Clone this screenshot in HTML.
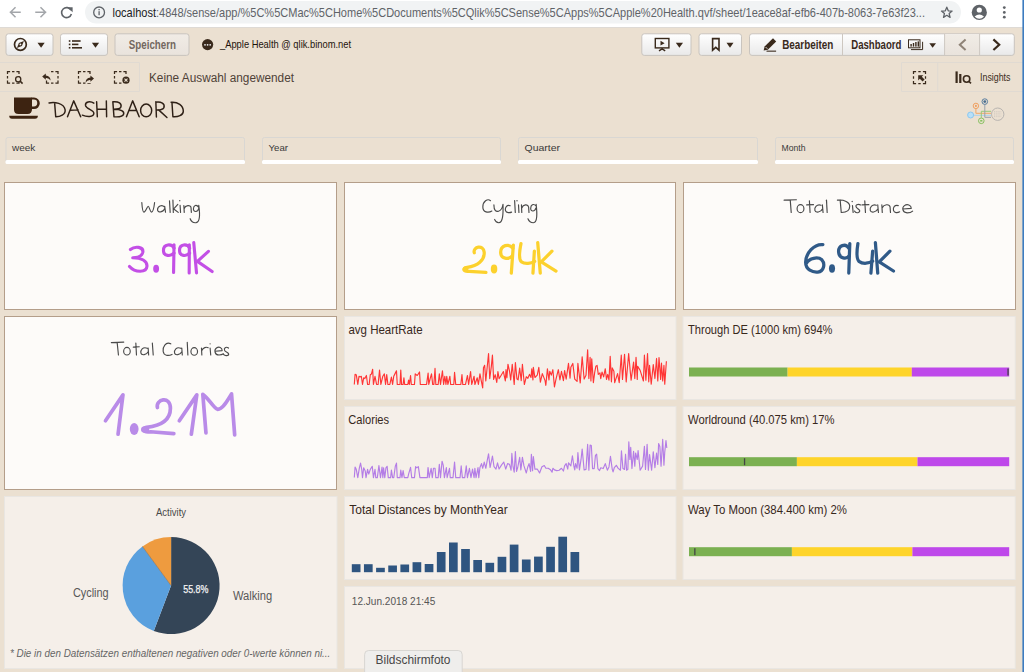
<!DOCTYPE html>
<html><head><meta charset="utf-8"><style>html,body{margin:0;padding:0;width:1024px;height:672px;overflow:hidden;background:#ebe0d1}svg{display:block;font-family:"Liberation Sans",sans-serif}</style></head>
<body><svg width="1024" height="672" viewBox="0 0 1024 672">
<rect x="0" y="0" width="1024" height="672" fill="#ebe0d1"/>
<rect x="0" y="0" width="1024" height="27" fill="#ffffff"/><rect x="0" y="27" width="1024" height="1" fill="#dedad5"/>
<rect x="85" y="1" width="876" height="22.5" rx="11.25" fill="#f1f3f4"/>
<g stroke="#a3a6aa" stroke-width="1.5" fill="none" stroke-linecap="square"><path d="M10.5 12.3H20M15 7.8L10.5 12.3L15 16.8"/><path d="M36 12.3H45.5M41 7.8L45.5 12.3L41 16.8"/></g>
<g stroke="#5f6368" stroke-width="1.6" fill="none"><path d="M71 10.2A5 5 0 1 0 71.4 14"/></g><path d="M67.5 7.3H72.6V12.3Z" fill="#5f6368"/>
<circle cx="99.1" cy="12.4" r="5.4" stroke="#5f6368" stroke-width="1.3" fill="none"/><rect x="98.45" y="11.2" width="1.3" height="4" fill="#5f6368"/><rect x="98.45" y="9" width="1.3" height="1.3" fill="#5f6368"/>
<text x="112.5" y="16.8" font-size="13" fill="#5f6368" font-weight="normal" font-style="normal" textLength="812.5" lengthAdjust="spacingAndGlyphs"><tspan fill="#202124">localhost</tspan>:4848/sense/app/%5C%5CMac%5CHome%5CDocuments%5CQlik%5CSense%5CApps%5CApple%20Health.qvf/sheet/1eace8af-efb6-407b-8063-7e63f23...</text>
<polygon points="946.80,7.20 948.27,10.78 952.13,11.07 949.18,13.57 950.09,17.33 946.80,15.30 943.51,17.33 944.42,13.57 941.47,11.07 945.33,10.78" fill="none" stroke="#5f6368" stroke-width="1.3" stroke-linejoin="round"/>
<circle cx="979.3" cy="12.4" r="7.6" fill="#5f6368"/><circle cx="979.3" cy="10" r="2.6" fill="#fff"/><path d="M974.6 16.6Q979.3 12.6 984 16.6Q981.8 18.8 979.3 18.8Q976.8 18.8 974.6 16.6Z" fill="#fff"/>
<g fill="#5f6368"><circle cx="1004.3" cy="7.6" r="1.4"/><circle cx="1004.3" cy="12.4" r="1.4"/><circle cx="1004.3" cy="17.2" r="1.4"/></g>
<defs><linearGradient id="bg" x1="0" y1="0" x2="0" y2="1"><stop offset="0" stop-color="#ffffff"/><stop offset="1" stop-color="#e9e9e9"/></linearGradient><linearGradient id="bgd" x1="0" y1="0" x2="0" y2="1"><stop offset="0" stop-color="#f1ece6"/><stop offset="1" stop-color="#e9e3dc"/></linearGradient></defs>
<rect x="6.0" y="33.8" width="47.0" height="21.6" rx="2.5" fill="url(#bg)" stroke="#c9c4be" stroke-width="1"/>
<rect x="60.5" y="33.8" width="47" height="21.6" rx="2.5" fill="url(#bg)" stroke="#c9c4be" stroke-width="1"/>
<circle cx="20.4" cy="44.4" r="5.9" stroke="#3a2a1c" stroke-width="1.7" fill="none"/><path d="M23.9 40.9L21.9 45.9L16.9 47.9L18.9 42.9Z" fill="#3a2a1c"/><circle cx="20.4" cy="44.4" r="0.9" fill="#f5f5f5"/>
<path d="M37.5 42.8H44.7L41.1 47.8Z" fill="#3a2a1c"/>
<g fill="#3a2a1c"><rect x="68.8" y="40.2" width="1.6" height="1.6"/><rect x="68.8" y="43.6" width="1.6" height="1.6"/><rect x="68.8" y="47" width="1.6" height="1.6"/><rect x="72" y="40.2" width="8.6" height="1.6"/><rect x="72" y="43.6" width="6.4" height="1.6"/><rect x="72" y="47" width="10" height="1.6"/></g>
<path d="M91.9 42.8H99.1L95.5 47.8Z" fill="#3a2a1c"/>
<rect x="115.0" y="33.8" width="74.0" height="21.6" rx="2.5" fill="url(#bgd)" stroke="#c9c4be" stroke-width="1"/>
<text x="128.8" y="48.8" font-size="12" fill="#73675e" font-weight="bold" font-style="normal" textLength="47.2" lengthAdjust="spacingAndGlyphs">Speichern</text>
<circle cx="207.6" cy="44.6" r="5.6" fill="#3a2a1c"/><g fill="#eee"><circle cx="205" cy="44.8" r="0.9"/><circle cx="207.6" cy="44.8" r="0.9"/><circle cx="210.2" cy="44.8" r="0.9"/></g>
<text x="220.0" y="47.8" font-size="11" fill="#1e140c" font-weight="normal" font-style="normal" textLength="131.0" lengthAdjust="spacingAndGlyphs">_Apple Health @ qlik.binom.net</text>
<rect x="641.8" y="33.8" width="49.200000000000045" height="21.6" rx="2.5" fill="url(#bg)" stroke="#c9c4be" stroke-width="1"/>
<rect x="699.0" y="33.8" width="42.5" height="21.6" rx="2.5" fill="url(#bg)" stroke="#c9c4be" stroke-width="1"/>
<g stroke="#3a2a1c" stroke-width="1.4" fill="none"><rect x="655.3" y="38.5" width="13.6" height="9.4"/><path d="M662.1 47.9V50M659 50.8L662.1 48.8L665.2 50.8"/></g><path d="M660.5 40.8V45.6L664.6 43.2Z" fill="#3a2a1c"/>
<path d="M675.8 42.8H683L679.4 47.8Z" fill="#3a2a1c"/>
<path d="M712.6 38.6H719V50.2L715.8 47.4L712.6 50.2Z" stroke="#3a2a1c" stroke-width="1.6" fill="none" stroke-linejoin="miter"/>
<path d="M726.5 42.8H733.5L730.0 47.8Z" fill="#3a2a1c"/>
<rect x="749.5" y="33.8" width="264.8" height="21.6" rx="2.5" fill="url(#bg)" stroke="#c9c4be"/>
<rect x="945" y="34.3" width="34.6" height="20.6" fill="url(#bgd)"/>
<g stroke="#cdc7c0"><path d="M842.5 34V55.4M944.6 34V55.4M979.6 34V55.4"/></g>
<path d="M763.6 50.6L764.6 46.6L773 38.2L776.2 41.4L767.8 49.8Z" fill="#3a2a1c"/><path d="M765.6 47L767.4 48.8" stroke="#f4f4f4" stroke-width="0.8"/><rect x="766.5" y="50.6" width="9.6" height="1.1" fill="#3a2a1c"/>
<text x="782.2" y="48.7" font-size="12" fill="#3a2a1c" font-weight="bold" font-style="normal" textLength="51.2" lengthAdjust="spacingAndGlyphs">Bearbeiten</text>
<text x="851.2" y="48.7" font-size="12" fill="#3a2a1c" font-weight="bold" font-style="normal" textLength="50.2" lengthAdjust="spacingAndGlyphs">Dashbaord</text>
<g stroke="#3a2a1c" stroke-width="1" fill="none"><rect x="908.5" y="39.8" width="11.5" height="8"/><path d="M911 49.6H922.6V41.8"/></g><g fill="#3a2a1c"><rect x="910.4" y="44" width="1.4" height="2.6"/><rect x="912.8" y="43" width="1.4" height="3.6"/><rect x="915.2" y="42" width="1.4" height="4.6"/><rect x="917.6" y="41.4" width="1.4" height="5.2"/></g>
<path d="M929.3 43.3H936L932.65 47.8Z" fill="#3a2a1c"/>
<path d="M965.6 39.4L959.8 44.7L965.6 50" stroke="#8f8377" stroke-width="2" fill="none"/>
<path d="M993.4 39.4L999.2 44.7L993.4 50" stroke="#3a2a1c" stroke-width="2.2" fill="none"/>
<path d="M0 62.5H139.5V91.5H0" stroke="#e0dad2" fill="none"/>
<path d="M1024 62.5H901.5V91.5H1024M937.7 62.5V91.5" stroke="#e0dad2" fill="none"/>
<path d="M7.5 74.1V71.5H10.1M12.05 71.5H14.45M16.4 71.5H19.0V74.1M19.0 76.05V78.45M19.0 80.4V83.0H16.4M14.45 83.0H12.05M10.1 83.0H7.5V80.4M7.5 78.45V76.05" stroke="#3a2a1c" stroke-width="1.25" fill="none"/>
<circle cx="18.2" cy="79.2" r="2.6" stroke="#3a2a1c" stroke-width="1.3" fill="#ebe0d1"/><path d="M20.1 81.1L22.6 83.6" stroke="#3a2a1c" stroke-width="1.5"/>
<path d="M46.5 74.1V71.5H49.1M51.05 71.5H53.45M55.4 71.5H58.0V74.1M58.0 76.05V78.45M58.0 80.4V83.0H55.4M53.45 83.0H51.05M49.1 83.0H46.5V80.4M46.5 78.45V76.05" stroke="#3a2a1c" stroke-width="1.25" fill="none"/>
<rect x="41" y="70" width="8" height="9" fill="#ebe0d1"/><path d="M42.2 76.6L45.8 73.4V75.4Q50.4 75.6 50.6 80.6Q48.8 77.6 45.8 78V79.8Z" fill="#3a2a1c"/>
<path d="M78.5 74.1V71.5H81.1M83.05 71.5H85.45M87.4 71.5H90.0V74.1M90.0 76.05V78.45M90.0 80.4V83.0H87.4M85.45 83.0H83.05M81.1 83.0H78.5V80.4M78.5 78.45V76.05" stroke="#3a2a1c" stroke-width="1.25" fill="none"/>
<rect x="86" y="74" width="8" height="9" fill="#ebe0d1"/><path d="M94 78.6L90.4 75.4V77.4Q85.8 77.6 85.6 82.6Q87.4 79.6 90.4 80V81.8Z" fill="#3a2a1c"/>
<path d="M114.5 74.1V71.5H117.1M119.05 71.5H121.45M123.4 71.5H126.0V74.1M126.0 76.05V78.45M126.0 80.4V83.0H123.4M121.45 83.0H119.05M117.1 83.0H114.5V80.4M114.5 78.45V76.05" stroke="#3a2a1c" stroke-width="1.25" fill="none"/>
<circle cx="126" cy="80.2" r="4.4" fill="#ebe0d1"/><circle cx="126" cy="80.2" r="3.6" fill="#3a2a1c"/><path d="M124.5 78.7L127.5 81.7M127.5 78.7L124.5 81.7" stroke="#ebe0d1" stroke-width="1.1"/>
<text x="149.0" y="81.5" font-size="12" fill="#4f4238" font-weight="normal" font-style="normal" textLength="145.0" lengthAdjust="spacingAndGlyphs">Keine Auswahl angewendet</text>
<path d="M913.5 74.1V71.5H916.1M918.3 71.5H920.7M922.9 71.5H925.5V74.1M925.5 76.3V78.7M925.5 80.9V83.5H922.9M920.7 83.5H918.3M916.1 83.5H913.5V80.9M913.5 78.7V76.3" stroke="#3a2a1c" stroke-width="1.25" fill="none"/>
<path d="M918.2 75.2H923.4L921.8 76.8L924.6 79.6L922.6 81.6L919.8 78.8L918.2 80.4Z" fill="#3a2a1c"/>
<g fill="#3a2a1c"><rect x="955.5" y="71.4" width="2.2" height="11.6"/><rect x="959.2" y="74" width="2.2" height="9"/></g><circle cx="966.6" cy="79" r="3.2" stroke="#3a2a1c" stroke-width="1.6" fill="none"/><path d="M968.8 81.2L971 83.4" stroke="#3a2a1c" stroke-width="1.6"/>
<text x="980.0" y="81.2" font-size="10.5" fill="#3a2d22" font-weight="normal" font-style="normal" textLength="30.5" lengthAdjust="spacingAndGlyphs">Insights</text>
<path d="M14 97.5H32V109Q32 114 27.5 114H18.5Q14 114 14 109.5Z" fill="#3d2311"/>
<path d="M31.5 97.5H34A5.8 5.8 0 0 1 34 109.1H31.5ZM31.5 99.6H33.8A3.45 3.45 0 0 1 33.8 106.5H31.5Z" fill="#3d2311" fill-rule="evenodd"/>
<path d="M9.2 115.8H37.9Q37.9 118.7 35 118.7H12Q9.2 118.7 9.2 115.8Z" fill="#3d2311"/>
<g transform="translate(46 96) scale(0.13870)" fill="none" stroke="#2e2016" stroke-width="10.5" stroke-linecap="round" stroke-linejoin="round"><path d="M22 50 C60 42, 130 50, 138 100 C142 135, 100 150, 72 150 M62 48 L70 150"/><path d="M155 150 L200 35 L250 150 M176 102 L232 100"/><path d="M345 52 C320 35, 280 40, 285 70 C290 95, 345 100, 345 125 C345 155, 290 150, 262 138"/><path d="M365 42 L370 150 M435 35 L437 150 M370 95 L436 93"/><path d="M482 42 L490 150 M482 42 C525 38, 548 55, 540 80 C535 95, 500 95, 490 95 C540 95, 565 110, 560 130 C555 150, 520 152, 490 150"/><path d="M580 150 L625 35 L672 150 M600 105 L652 105"/><ellipse cx="722" cy="104" rx="40" ry="46"/><path d="M792 42 L796 152 M792 45 C830 40, 860 55, 850 85 C845 100, 810 102, 796 100 M812 100 L872 155"/><path d="M902 45 C950 40, 990 70, 990 110 C990 140, 950 152, 918 150 M908 45 L915 150"/></g>
<g fill="none" stroke-width="1"><path d="M975.9 108.9V113.3H991" stroke="#f0a868"/><path d="M974 115.3H991" stroke="#a8d4ee"/><path d="M981.3 117.8V111.3H991" stroke="#98c878"/><path d="M984.8 104.6V117.3H991" stroke="#9aa2aa"/><circle cx="997.7" cy="114.2" r="6.2" stroke="#b8b4b0"/><path d="M994 111.6H1001.4M994 113.2H1001.4M994 115H1001.4M994 116.6H1001.4" stroke="#c8c2bc" stroke-width="0.7" stroke-dasharray="1 0.8"/><circle cx="975.9" cy="105.9" r="2.7" stroke="#f0a060"/><rect x="975" y="104.9" width="1.8" height="2" fill="#f0a060" stroke="none"/><circle cx="984.8" cy="101.6" r="2.8" stroke="#5a7ea0"/><circle cx="984.8" cy="101.6" r="1.4" fill="#4a6e90" stroke="none"/><circle cx="970.6" cy="115" r="3" stroke="#8cc8f0" fill="#b8e0f8"/><circle cx="981.3" cy="120.8" r="2.8" stroke="#88c060"/><rect x="980.2" y="120" width="2.2" height="1.6" fill="#88c060" stroke="none"/></g>
<rect x="6.0" y="137.5" width="238.5" height="26" rx="2" fill="#ebe0d1" stroke="#d9d7d3"/>
<rect x="5.5" y="160" width="239.5" height="4" rx="1.5" fill="#ffffff"/>
<text x="12.0" y="151.4" font-size="9.6" fill="#3a3a3a" font-weight="normal" font-style="normal" textLength="23.3" lengthAdjust="spacingAndGlyphs">week</text>
<rect x="262.5" y="137.5" width="238" height="26" rx="2" fill="#ebe0d1" stroke="#d9d7d3"/>
<rect x="262" y="160" width="239" height="4" rx="1.5" fill="#ffffff"/>
<text x="268.5" y="151.4" font-size="9.6" fill="#3a3a3a" font-weight="normal" font-style="normal" textLength="19.5" lengthAdjust="spacingAndGlyphs">Year</text>
<rect x="518.5" y="137.5" width="239" height="26" rx="2" fill="#ebe0d1" stroke="#d9d7d3"/>
<rect x="518" y="160" width="240" height="4" rx="1.5" fill="#ffffff"/>
<text x="524.5" y="151.4" font-size="9.6" fill="#3a3a3a" font-weight="normal" font-style="normal" textLength="35.5" lengthAdjust="spacingAndGlyphs">Quarter</text>
<rect x="775.5" y="137.5" width="238" height="26" rx="2" fill="#ebe0d1" stroke="#d9d7d3"/>
<rect x="775" y="160" width="239" height="4" rx="1.5" fill="#ffffff"/>
<text x="781.5" y="151.4" font-size="9.6" fill="#3a3a3a" font-weight="normal" font-style="normal" textLength="24.0" lengthAdjust="spacingAndGlyphs">Month</text>
<rect x="4.5" y="182.5" width="332" height="127" fill="#fdfbf9" stroke="#b49e8a"/>
<rect x="344.5" y="182.5" width="331" height="127" fill="#fdfbf9" stroke="#b49e8a"/>
<rect x="683.5" y="182.5" width="332" height="127" fill="#fdfbf9" stroke="#b49e8a"/>
<rect x="4.5" y="316.5" width="332" height="173" fill="#fdfbf9" stroke="#b49e8a"/>
<g transform="translate(124 238) scale(0.09179)" fill="none" stroke="#c34fe6" stroke-width="34" stroke-linecap="round" stroke-linejoin="round">
<path d="M70 125 C120 85, 215 95, 205 155 C195 200, 140 215, 95 215 C190 215, 255 250, 250 310 C245 380, 120 380, 60 310"/>
<path d="M545 110 C520 60, 430 60, 430 135 C430 200, 510 205, 545 165"/>
<path d="M545 75 L540 375"/>
<path d="M715 110 C690 60, 605 60, 605 135 C605 200, 680 205, 715 165"/>
<path d="M712 75 L710 380"/>
<path d="M760 50 L790 380"/>
<path d="M920 145 L800 255 L960 365"/>
<ellipse cx="350" cy="335" rx="32" ry="44" fill="#c34fe6" stroke="none"/>
</g>
<g transform="translate(458 238) scale(0.10156)" fill="none" stroke="#fcd12d" stroke-width="32" stroke-linecap="round" stroke-linejoin="round">
<path d="M160 145 C145 85, 250 60, 258 140 C262 220, 195 275, 90 290 C40 298, 50 335, 110 328 L275 338"/>
<path d="M540 100 C500 50, 420 70, 420 140 C420 210, 500 215, 535 175"/>
<path d="M545 70 L525 345"/>
<path d="M620 55 C605 130, 595 210, 625 235 C660 260, 720 250, 755 230"/>
<path d="M752 130 L738 345"/>
<path d="M785 45 L810 345"/>
<path d="M925 130 L820 235 L965 325"/>
<ellipse cx="355" cy="305" rx="32" ry="44" fill="#fcd12d" stroke="none"/>
<ellipse cx="75" cy="305" rx="28" ry="26" fill="#fcd12d" stroke="none"/>
</g>
<g transform="translate(798 238) scale(0.10156)" fill="none" stroke="#305a88" stroke-width="32" stroke-linecap="round" stroke-linejoin="round">
<path d="M245 65 C160 55, 75 150, 75 240 C75 315, 145 340, 195 335 C255 328, 270 255, 235 215 C195 180, 110 200, 85 245"/>
<path d="M500 100 C470 50, 395 70, 400 140 C405 205, 480 210, 505 175"/>
<path d="M510 55 L500 345"/>
<path d="M590 55 C578 130, 572 200, 600 230 C640 260, 700 250, 735 228"/>
<path d="M735 130 L718 345"/>
<path d="M762 45 L785 345"/>
<path d="M905 130 L800 235 L940 325"/>
<ellipse cx="335" cy="300" rx="30" ry="42" fill="#305a88" stroke="none"/>
</g>
<g transform="translate(100 385) scale(0.13672)" fill="none" stroke="#b98be8" stroke-width="27" stroke-linecap="round" stroke-linejoin="round">
<path d="M40 262 L168 72 L132 360"/>
<path d="M420 165 C405 105, 515 75, 515 170 C515 240, 470 295, 340 310 C300 318, 310 350, 370 342 L540 355"/>
<path d="M580 262 L708 72 L668 360"/>
<path d="M775 350 L752 68 C790 90, 830 170, 860 178 C900 180, 940 100, 962 65 L985 365"/>
<ellipse cx="250" cy="322" rx="32" ry="44" fill="#b98be8" stroke="none"/>
<ellipse cx="330" cy="325" rx="30" ry="24" fill="#b98be8" stroke="none"/>
</g>
<g transform="translate(136 196) scale(0.06835)" fill="none" stroke="#4a4a4a" stroke-width="17" stroke-linecap="round" stroke-linejoin="round">
<path d="M85 95 C90 170, 95 235, 115 235 C140 235, 165 150, 178 150 C195 150, 205 235, 228 235 C255 235, 268 130, 272 98"/>
<path d="M415 160 C380 120, 315 150, 315 200 C315 250, 400 245, 420 180 M420 150 L432 238"/>
<path d="M490 70 L500 240"/>
<path d="M540 60 L546 240 M612 122 L552 190 L618 240"/>
<path d="M645 135 L652 240"/>
<path d="M700 140 L706 240 M706 185 C720 135, 800 125, 805 170 L810 240"/>
<path d="M915 165 C885 115, 840 140, 840 190 C840 240, 905 240, 918 180 M918 135 C935 250, 940 380, 880 390 C840 395, 805 365, 792 332"/>
<ellipse cx="640" cy="68" rx="10" ry="10" fill="#4a4a4a" stroke="none"/>
</g>
<g transform="translate(476 194) scale(0.06835)" fill="none" stroke="#4a4a4a" stroke-width="17" stroke-linecap="round" stroke-linejoin="round">
<path d="M212 98 C170 60, 100 110, 100 190 C100 270, 180 280, 232 250"/>
<path d="M262 160 C262 240, 290 262, 330 252 C370 242, 390 182, 395 150 M395 150 C400 300, 392 420, 332 420 C302 420, 282 400, 272 372"/>
<path d="M500 172 C450 152, 422 202, 432 242 C442 280, 500 275, 520 265"/>
<path d="M565 95 L575 270"/>
<path d="M622 160 L628 270"/>
<path d="M665 160 L670 270 M670 205 C690 152, 760 142, 770 192 L775 270"/>
<path d="M878 175 C840 132, 800 162, 800 212 C800 262, 860 262, 880 202 M880 150 C895 280, 900 420, 840 420 C800 420, 772 392, 760 362"/>
<ellipse cx="600" cy="98" rx="10" ry="10" fill="#4a4a4a" stroke="none"/>
</g>
<g transform="translate(780 194) scale(0.13672)" fill="none" stroke="#4a4a4a" stroke-width="8.5" stroke-linecap="round" stroke-linejoin="round">
<path d="M30 45 L120 42 M75 45 L82 135"/>
<path d="M215 50 L220 135 M195 80 L245 78"/>
<path d="M300 82 C270 70, 250 100, 255 120 C260 140, 300 135, 310 110 M310 80 L315 135"/>
<path d="M340 45 L345 135"/>
<path d="M420 45 C470 40, 510 60, 510 90 C510 125, 480 135, 450 135 M440 45 L448 135"/>
<path d="M530 85 L535 135"/>
<path d="M590 80 C570 70, 545 80, 560 100 C575 115, 595 120, 575 135 C560 140, 548 132, 545 125"/>
<path d="M620 50 L625 135 M600 80 L650 78"/>
<path d="M705 82 C675 70, 655 100, 660 120 C665 140, 705 135, 715 110 M715 80 L720 135"/>
<path d="M745 80 L748 135 M748 100 C760 75, 800 70, 805 95 L808 135"/>
<path d="M865 85 C840 75, 825 100, 830 120 C835 140, 860 140, 875 130"/>
<path d="M900 110 L960 105 C960 80, 930 70, 910 85 C890 100, 895 135, 930 138 C950 138, 965 130, 970 125"/>
<ellipse cx="528" cy="55" rx="5" ry="5" fill="#4a4a4a" stroke="none"/>
</g>
<g transform="translate(780 194) scale(0.13672)" fill="none" stroke="#4a4a4a" stroke-width="8.5"><ellipse cx="150" cy="107" rx="25" ry="29"/></g>
<g transform="translate(106 336) scale(0.12695)" fill="none" stroke="#4a4a4a" stroke-width="9" stroke-linecap="round" stroke-linejoin="round">
<path d="M42 52 L140 48 M88 52 L98 150"/>
<path d="M235 55 L240 150 M215 88 L262 85"/>
<path d="M325 97 C290 80, 270 115, 275 135 C280 155, 320 150, 332 125 M332 95 L336 150"/>
<path d="M365 55 L372 150"/>
<path d="M510 62 C470 40, 445 90, 450 120 C455 155, 490 160, 520 145"/>
<path d="M590 97 C555 80, 535 115, 540 135 C545 155, 585 150, 597 125 M597 95 L601 150"/>
<path d="M640 50 L645 150"/>
<path d="M752 95 L755 150 M755 115 C765 90, 790 85, 805 92"/>
<path d="M820 95 L825 150"/>
<path d="M860 120 L915 115 C915 90, 890 80, 870 95 C850 110, 855 150, 890 150 C905 150, 918 145, 925 140"/>
<path d="M965 95 C945 80, 925 95, 935 115 C945 130, 975 130, 965 150 C950 160, 930 150, 925 145"/>
<ellipse cx="820" cy="62" rx="5" ry="5" fill="#4a4a4a" stroke="none"/>
</g>
<g transform="translate(106 336) scale(0.12695)" fill="none" stroke="#4a4a4a" stroke-width="9"><ellipse cx="165" cy="120" rx="26" ry="30"/><ellipse cx="695" cy="122" rx="26" ry="30"/></g>
<rect x="344.5" y="316.5" width="331.5" height="83.0" fill="#f5efe9" stroke="#e9e6e2" stroke-width="1"/>
<rect x="344.5" y="406.5" width="331.5" height="83.0" fill="#f5efe9" stroke="#e9e6e2" stroke-width="1"/>
<rect x="344.5" y="496.5" width="331.5" height="83.0" fill="#f5efe9" stroke="#e9e6e2" stroke-width="1"/>
<rect x="344.5" y="586.5" width="670.7" height="82.0" fill="#f5efe9" stroke="#e9e6e2" stroke-width="1"/>
<rect x="683" y="316.5" width="332.20000000000005" height="83.0" fill="#f5efe9" stroke="#e9e6e2" stroke-width="1"/>
<rect x="683" y="406.5" width="332.20000000000005" height="83.0" fill="#f5efe9" stroke="#e9e6e2" stroke-width="1"/>
<rect x="683" y="496.5" width="332.20000000000005" height="83.0" fill="#f5efe9" stroke="#e9e6e2" stroke-width="1"/>
<rect x="4.5" y="496.5" width="332.5" height="172.0" fill="#f5efe9" stroke="#e9e6e2" stroke-width="1"/>
<text x="348.4" y="334.0" font-size="13" fill="#38281c" font-weight="normal" font-style="normal" textLength="74.2" lengthAdjust="spacingAndGlyphs">avg HeartRate</text>
<text x="348.3" y="423.5" font-size="13" fill="#38281c" font-weight="normal" font-style="normal" textLength="40.8" lengthAdjust="spacingAndGlyphs">Calories</text>
<text x="349.3" y="514.0" font-size="13" fill="#38281c" font-weight="normal" font-style="normal" textLength="158.4" lengthAdjust="spacingAndGlyphs">Total Distances by MonthYear</text>
<text x="688.0" y="334.0" font-size="13" fill="#38281c" font-weight="normal" font-style="normal" textLength="144.5" lengthAdjust="spacingAndGlyphs">Through DE (1000 km) 694%</text>
<text x="688.0" y="424.0" font-size="13" fill="#38281c" font-weight="normal" font-style="normal" textLength="146.5" lengthAdjust="spacingAndGlyphs">Worldround (40.075 km) 17%</text>
<text x="688.0" y="514.0" font-size="13" fill="#38281c" font-weight="normal" font-style="normal" textLength="159.0" lengthAdjust="spacingAndGlyphs">Way To Moon (384.400 km) 2%</text>
<text x="351.8" y="604.6" font-size="11.5" fill="#555555" font-weight="normal" font-style="normal" textLength="83.5" lengthAdjust="spacingAndGlyphs">12.Jun.2018 21:45</text>
<polyline points="354.30,384.45 355.08,374.30 356.25,374.69 357.81,384.45 358.98,376.25 360.16,377.03 361.33,376.25 362.50,384.45 363.67,377.81 364.84,378.59 366.41,375.47 367.58,384.45 369.14,384.45 370.31,374.69 371.48,373.91 372.66,369.22 373.44,384.45 375.00,376.25 376.56,384.45 378.12,384.45 379.53,370.00 380.86,384.45 382.81,376.25 384.38,373.91 385.55,384.45 386.72,374.69 387.89,384.45 389.84,384.45 391.41,377.03 392.58,384.45 393.75,376.25 395.31,373.12 396.48,370.78 397.27,384.45 400.00,384.45 400.78,370.00 401.56,384.45 403.12,384.45 403.91,377.81 404.69,384.45 407.81,384.45 408.59,380.16 409.38,384.45 410.55,375.47 411.33,384.45 414.45,384.45 415.23,373.91 417.19,375.47 418.36,373.91 419.53,371.95 420.31,384.45 426.56,384.45 428.12,373.12 428.78,384.45 430.34,377.81 431.52,373.91 432.69,384.45 433.86,384.45 435.03,368.44 435.81,384.45 438.16,384.45 439.33,373.91 440.50,384.45 442.45,370.78 443.62,384.45 444.80,376.25 445.97,384.45 446.75,376.25 447.92,384.45 449.88,376.25 450.66,384.45 453.78,384.45 454.56,372.34 455.73,384.45 460.81,384.45 461.98,374.69 462.77,384.45 465.50,384.45 467.45,375.47 468.62,384.45 470.58,371.56 471.75,384.45 474.09,376.25 474.88,384.45 477.22,377.81 478.39,384.45 479.95,373.91 481.12,380.16 482.69,387.97 483.47,367.66 484.64,365.31 485.81,380.94 487.38,365.31 488.55,353.59 489.72,378.59 491.28,366.88 492.45,355.16 493.62,379.38 495.19,374.69 496.75,382.50 497.92,371.56 499.09,378.59 501.05,375.47 503.39,371.56 505.34,380.94 506.00,369.69 506.91,377.81 507.95,364.22 509.52,371.25 510.69,379.84 512.25,364.22 514.20,384.53 515.38,362.66 516.94,379.06 518.11,379.84 519.67,368.12 521.23,380.62 522.41,364.22 524.36,384.53 526.31,376.72 527.88,378.28 529.44,374.38 531.00,377.50 531.78,368.91 532.95,379.84 533.34,367.34 534.91,377.50 537.25,375.16 538.81,367.34 540.38,382.19 542.33,373.59 545.06,380.62 545.84,385.31 547.41,368.91 548.97,379.84 549.75,371.25 551.31,375.16 552.88,369.69 554.44,386.88 556.00,379.06 558.34,369.69 559.91,379.84 561.47,371.25 563.42,380.62 564.59,370.47 566.16,379.06 568.50,363.44 570.06,378.28 570.84,367.34 572.80,363.44 574.75,379.06 577.09,381.41 577.88,363.44 580.22,382.97 582.17,356.80 584.12,379.06 586.00,375.27 587.64,349.84 588.87,378.55 590.10,357.22 590.92,381.01 591.74,358.86 593.38,382.65 594.61,372.81 595.84,366.25 597.07,365.43 598.30,374.45 599.95,372.81 600.77,378.55 602.00,371.99 603.64,376.91 605.28,368.71 606.51,379.37 607.74,374.45 608.97,380.19 610.20,356.40 611.43,381.83 612.25,367.89 613.89,371.17 614.71,382.65 617.58,373.63 619.22,382.65 621.27,355.17 622.50,379.37 624.55,354.35 626.20,381.83 628.66,353.53 630.30,371.99 631.12,380.19 633.58,362.15 634.81,378.55 636.04,357.22 637.27,379.37 637.68,366.25 640.14,370.35 643.42,381.01 644.41,355.17 645.88,380.19 647.52,353.53 648.75,381.83 649.57,365.43 651.21,384.29 653.27,364.61 654.91,378.55 656.55,358.45 657.78,381.01 659.01,357.63 660.65,379.37 661.47,362.97 662.70,381.01 663.93,365.43 664.75,384.29 666.39,361.32" fill="none" stroke="#ff3535" stroke-width="1.15" stroke-linejoin="round"/>
<polyline points="354.30,477.58 355.08,467.03 356.25,469.38 357.81,477.58 359.38,467.81 360.55,463.12 361.72,469.38 362.50,477.58 363.67,467.81 365.23,470.94 366.02,477.58 367.58,469.38 368.75,474.06 370.31,469.38 372.27,466.25 373.44,477.58 375.00,469.38 375.78,477.58 377.34,477.58 378.91,465.47 380.47,477.58 382.03,467.03 382.81,477.58 383.59,467.81 384.77,477.58 385.94,467.81 387.11,466.25 388.28,477.58 390.62,477.58 391.41,470.16 392.58,477.58 393.75,477.58 395.31,466.25 396.48,463.12 397.27,477.58 400.00,477.58 400.78,470.16 401.95,477.58 403.12,470.55 404.30,477.58 407.81,477.58 408.59,474.06 410.55,467.42 411.72,477.58 414.45,477.58 415.62,466.64 416.80,467.81 418.36,466.64 419.92,477.58 427.34,477.58 428.00,467.50 428.12,467.81 429.17,477.66 431.12,468.28 432.30,477.66 433.47,468.28 435.03,468.28 435.81,477.66 438.16,477.66 439.33,464.38 440.50,477.66 442.06,461.25 443.23,465.16 444.41,477.66 446.36,467.50 447.14,477.66 449.48,468.28 450.27,477.66 453.00,477.66 454.56,462.03 455.73,477.66 460.03,477.66 461.20,465.94 462.38,477.66 464.72,477.66 466.28,465.94 467.45,477.66 469.41,468.28 470.97,477.66 472.53,469.06 474.09,477.66 474.88,468.28 476.05,477.66 478.00,467.50 478.78,477.66 479.95,467.50 481.52,463.59 482.69,468.28 484.25,462.03 485.81,468.28 487.38,459.69 488.55,453.83 490.11,467.50 492.45,456.17 494.02,466.72 495.97,469.06 497.53,462.81 499.09,469.06 501.44,465.16 503.78,462.03 505.73,469.06 506.00,468.28 507.56,463.59 509.52,464.38 511.08,470.23 511.86,453.44 513.03,466.72 514.20,472.19 515.38,451.48 516.55,471.41 517.72,467.50 519.67,457.34 520.84,469.84 522.41,457.34 523.97,465.94 526.31,472.97 527.88,466.72 529.05,463.59 530.61,471.41 531.39,454.22 532.56,470.62 533.34,456.56 534.91,469.06 537.25,469.06 539.59,472.97 541.94,466.72 544.28,465.55 545.84,468.28 548.19,468.28 550.53,469.84 552.09,472.19 552.88,468.28 554.44,469.84 556.78,470.62 559.12,470.23 561.47,468.28 563.42,471.02 564.59,465.94 566.16,463.59 567.72,469.06 568.50,462.81 570.84,465.94 572.41,455.78 573.97,466.72 574.75,469.84 575.53,463.59 577.09,468.28 577.88,452.66 579.44,469.84 581.00,459.69 582.17,449.14 584.12,469.84 586.00,469.37 587.64,444.35 588.87,470.19 590.10,445.17 591.33,445.58 592.56,468.55 594.20,468.55 595.43,455.43 596.66,454.20 597.89,468.55 599.54,470.60 600.77,467.73 603.23,468.55 605.28,463.63 607.33,470.19 608.97,466.91 610.45,456.25 612.25,469.37 613.07,471.83 614.30,467.73 616.35,465.27 617.99,468.14 620.45,470.19 621.44,450.91 622.91,468.55 624.55,469.37 625.54,454.20 626.61,470.19 627.84,469.37 628.82,441.89 629.89,459.53 630.71,447.22 631.94,468.55 633.58,451.32 634.81,466.09 635.63,452.97 637.27,459.53 638.09,450.50 640.14,470.19 642.60,466.09 644.41,446.40 645.47,469.37 647.11,444.35 648.34,470.19 649.57,454.61 651.62,470.19 653.27,451.74 654.91,467.73 656.55,452.97 657.78,464.45 658.60,443.53 659.83,446.40 661.06,466.09 662.70,439.43 663.93,465.27 664.75,452.15 665.98,440.66 666.80,448.04" fill="none" stroke="#b47de6" stroke-width="1.15" stroke-linejoin="round"/>
<rect x="351.80" y="564.20" width="8.7" height="8.00" fill="#2f5580"/>
<rect x="363.95" y="564.20" width="8.7" height="8.00" fill="#2f5580"/>
<rect x="376.10" y="567.80" width="8.7" height="4.40" fill="#2f5580"/>
<rect x="388.25" y="565.50" width="8.7" height="6.70" fill="#2f5580"/>
<rect x="400.40" y="564.50" width="8.7" height="7.70" fill="#2f5580"/>
<rect x="412.55" y="562.20" width="8.7" height="10.00" fill="#2f5580"/>
<rect x="424.70" y="564.00" width="8.7" height="8.20" fill="#2f5580"/>
<rect x="436.85" y="552.00" width="8.7" height="20.20" fill="#2f5580"/>
<rect x="449.00" y="542.50" width="8.7" height="29.70" fill="#2f5580"/>
<rect x="461.15" y="549.00" width="8.7" height="23.20" fill="#2f5580"/>
<rect x="473.30" y="560.00" width="8.7" height="12.20" fill="#2f5580"/>
<rect x="485.45" y="562.80" width="8.7" height="9.40" fill="#2f5580"/>
<rect x="497.60" y="556.80" width="8.7" height="15.40" fill="#2f5580"/>
<rect x="509.75" y="544.60" width="8.7" height="27.60" fill="#2f5580"/>
<rect x="521.90" y="559.50" width="8.7" height="12.70" fill="#2f5580"/>
<rect x="534.05" y="556.60" width="8.7" height="15.60" fill="#2f5580"/>
<rect x="546.20" y="546.80" width="8.7" height="25.40" fill="#2f5580"/>
<rect x="558.35" y="536.70" width="8.7" height="35.50" fill="#2f5580"/>
<rect x="570.50" y="552.00" width="8.7" height="20.20" fill="#2f5580"/>
<rect x="689" y="367.5" width="98.60000000000002" height="9" fill="#7bb051"/><rect x="787.6" y="367.5" width="124.19999999999993" height="9" fill="#fed42a"/><rect x="911.8" y="367.5" width="97.40000000000009" height="9" fill="#be48ea"/>
<rect x="1007.4" y="368.5" width="1.3" height="7" fill="#444"/>
<rect x="689" y="457.2" width="107.89999999999998" height="9" fill="#7bb051"/><rect x="796.9" y="457.2" width="120.60000000000002" height="9" fill="#fed42a"/><rect x="917.5" y="457.2" width="91.70000000000005" height="9" fill="#be48ea"/>
<rect x="743.9" y="458.2" width="1.3" height="7" fill="#444"/>
<rect x="689" y="547.2" width="102.89999999999998" height="9" fill="#7bb051"/><rect x="791.9" y="547.2" width="120.5" height="9" fill="#fed42a"/><rect x="912.4" y="547.2" width="96.80000000000007" height="9" fill="#be48ea"/>
<rect x="694.1999999999999" y="548.2" width="1.3" height="7" fill="#444"/>
<path d="M171.1 585.6L171.10 537.10A48.5 48.5 0 1 1 153.80 630.91Z" fill="#344557"/>
<path d="M171.1 585.6L153.80 630.91A48.5 48.5 0 0 1 142.46 546.46Z" fill="#5aa0de"/>
<path d="M171.1 585.6L142.46 546.46A48.5 48.5 0 0 1 171.10 537.10Z" fill="#ee9b3f"/>
<path d="M171.1 585.6L142.46 546.46" stroke="#8a6a4a" stroke-width="0.6"/>
<text x="183.2" y="593.2" font-size="10.5" fill="#f4f4f4" font-weight="normal" font-style="normal" textLength="25.2" lengthAdjust="spacingAndGlyphs" stroke="#f4f4f4" stroke-width="0.25">55.8%</text>
<text x="72.9" y="596.7" font-size="12" fill="#585858" font-weight="normal" font-style="normal" textLength="35.7" lengthAdjust="spacingAndGlyphs">Cycling</text>
<text x="232.9" y="599.6" font-size="12" fill="#585858" font-weight="normal" font-style="normal" textLength="39.3" lengthAdjust="spacingAndGlyphs">Walking</text>
<text x="156.0" y="515.6" font-size="11" fill="#484848" font-weight="normal" font-style="normal" textLength="30.0" lengthAdjust="spacingAndGlyphs">Activity</text>
<text x="10.0" y="656.9" font-size="10" fill="#666666" font-weight="normal" font-style="italic" textLength="320.3" lengthAdjust="spacingAndGlyphs">* Die in den Datensätzen enthaltenen negativen oder 0-werte können ni...</text>
<rect x="364.6" y="650.5" width="97.6" height="30" rx="4" fill="#efeeec" stroke="#d8d6d2"/>
<text x="375.6" y="664.2" font-size="12.5" fill="#474747" font-weight="normal" font-style="normal" textLength="74.9" lengthAdjust="spacingAndGlyphs">Bildschirmfoto</text>
<rect x="1022.4" y="0" width="1.6" height="672" fill="#3d7cc0"/>
</svg></body></html>
